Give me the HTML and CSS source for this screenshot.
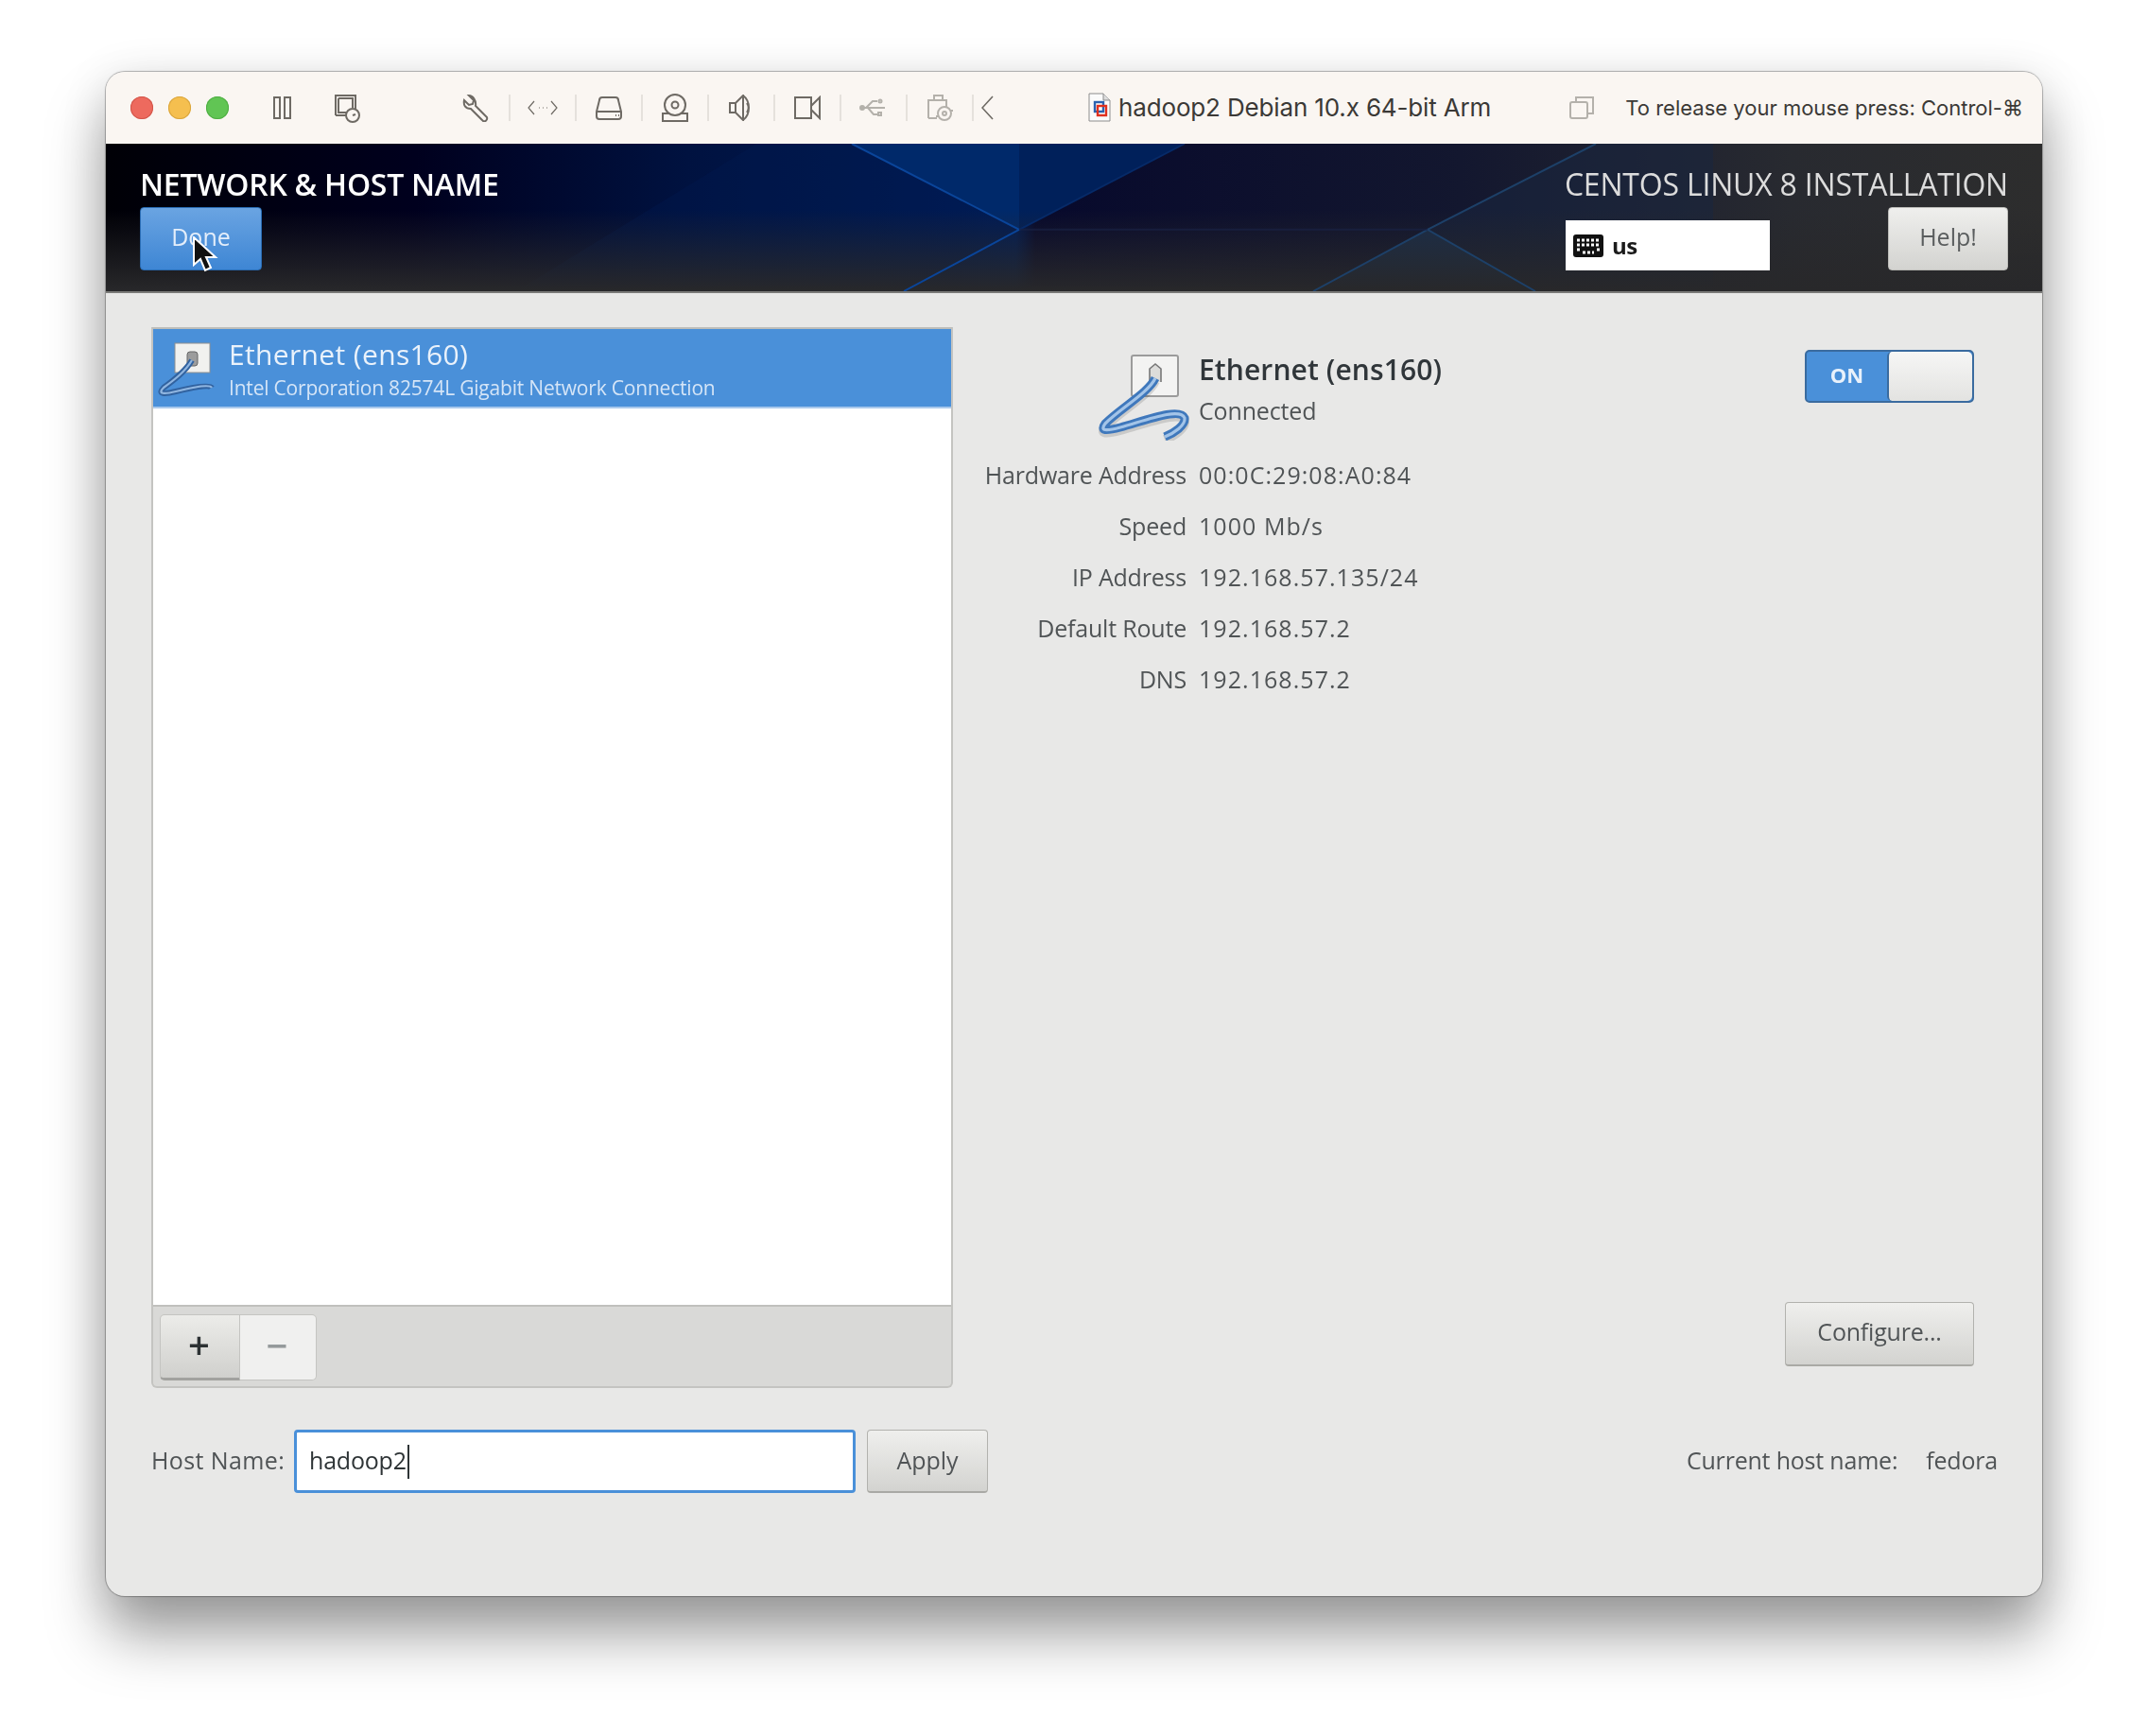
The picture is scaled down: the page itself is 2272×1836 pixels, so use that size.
FILE: index.html
```html
<!DOCTYPE html>
<html lang="en">
<head>
<meta charset="utf-8">
<title>hadoop2 Debian 10.x 64-bit Arm</title>
<link rel="stylesheet" href="styles.css">
</head>
<body>
<div class="window">
  <div class="titlebar">
    <div class="lights"><span class="light red"></span><span class="light yellow"></span><span class="light green"></span></div>
    <svg class="ic pause" viewBox="0 0 19 24"><path d="M1 1h6v22H1zM12 1h6v22h-6z"/></svg>
    <svg class="ic snap" viewBox="0 0 28 30"><path d="M2 22V1h21v14M2 22h11M5 4h15v10M5 4v15h8"/><circle cx="20" cy="22" r="7"/><path d="M20 22l3-1"/></svg>
    <div class="tools">
      <div class="tool"><svg class="ic" width="30" height="30" viewBox="0 0 30 30"><path d="M7 2l5 5-1 4-4 1-5-5c-1 5 1 9 7 9l13 13c2 1 5-1 4-4L14 13c1-6-3-11-7-11z"/></svg></div>
      <div class="tool"><svg class="ic thin" width="32" height="24" viewBox="0 0 32 24"><path d="M7 5L1 12l6 7M25 5l6 7-6 7M12 12h1M16 12h1M20 12h1"/></svg></div>
      <div class="tool"><svg class="ic" width="30" height="26" viewBox="0 0 30 26"><path d="M8 2h14c2 0 3 1 3 3l3 12v5c0 2-1 3-3 3H5c-2 0-3-1-3-3v-5L5 5c0-2 1-3 3-3zM2 17h26M22 21h1M25 21h1"/></svg></div>
      <div class="tool"><svg class="ic" width="30" height="30" viewBox="0 0 30 30"><circle cx="15" cy="12" r="11"/><circle cx="15" cy="12" r="3.5"/><path d="M2 20v9h26v-9M2 21h7M21 21h7"/></svg></div>
      <div class="tool"><svg class="ic" width="28" height="28" viewBox="0 0 28 28"><path d="M2 9h6l8-8v26l-8-8H2zM8 9v10M20 9c2 3 2 7 0 10M16 1c8 6 8 20 0 26"/></svg></div>
      <div class="tool"><svg class="ic" width="30" height="26" viewBox="0 0 30 26"><path d="M2 2h17v22H2zM19 11l9-9v22l-9-9"/></svg></div>
      <div class="tool"><svg class="ic dim" width="30" height="24" viewBox="0 0 30 24"><path d="M1 12h26M7 12l7-7h5M9 12l6 7h5"/><circle cx="3" cy="12" r="2"/><circle cx="22" cy="5" r="1.5"/><rect x="20" y="17" width="3" height="3"/></svg></div>
      <div class="tool"><svg class="ic dim" width="30" height="30" viewBox="0 0 30 30"><path d="M3 26V7h6V2h9v5h4v8M3 26h9M9 7h9"/><circle cx="20" cy="21" r="7"/><circle cx="20" cy="21" r="2"/><path d="M27 18h2M11 24h2"/></svg></div>
      <svg class="ic chevron" width="13" height="26" viewBox="0 0 13 26"><path d="M12 1L1 13l11 12"/></svg>
    </div>
    <div class="vm-title">
      <svg class="doc" width="24" height="31" viewBox="0 0 24 31"><path d="M1 1h15l7 7v22H1z" fill="#fbfbfb" stroke="#8d8d8d"/><path d="M16 1v7h7" fill="#ddd" stroke="#8d8d8d"/><rect x="7" y="10" width="9" height="10" fill="none" stroke="#2a62b0" stroke-width="2.4"/><rect x="10" y="14" width="9" height="10" fill="none" stroke="#e0301e" stroke-width="2.4"/></svg>
      <span>hadoop2 Debian 10.x 64-bit Arm</span>
    </div>
    <svg class="ic dim copy" width="26" height="24" viewBox="0 0 26 24"><path d="M7 6V1h18v17h-6"/><rect x="1" y="6" width="18" height="17" rx="2"/></svg>
    <div class="release">To release your mouse press: Control-⌘</div>
  </div>

  <div class="screen">
    <header class="header">
      <svg class="header-art" viewBox="0 0 2048 158" preserveAspectRatio="none">
        <defs>
          <linearGradient id="hbase" x1="0" x2="1" y1="0" y2="0">
            <stop offset="0" stop-color="#000006"/>
            <stop offset=".16" stop-color="#00001e"/>
            <stop offset=".3" stop-color="#001240"/>
            <stop offset=".47" stop-color="#001d58"/>
            <stop offset=".48" stop-color="#07092c"/>
            <stop offset=".7" stop-color="#13172f"/>
            <stop offset=".87" stop-color="#282a30"/>
            <stop offset="1" stop-color="#2d2d2d"/>
          </linearGradient>
          <linearGradient id="hfade" x1="0" x2="0" y1="0" y2="1">
            <stop offset=".45" stop-color="#28282a" stop-opacity="0"/>
            <stop offset="1" stop-color="#28282a"/>
          </linearGradient>
        </defs>
        <rect width="2048" height="158" fill="url(#hbase)"/>
        <polygon points="789,0 966,0 966,92" fill="#00296a"/>
        <polygon points="966,0 1141,0 966,92" fill="#00205a"/>
        <polygon points="1398,92 1576,0 1700,0 1700,158 1512,158" fill="#1a2740" opacity=".55"/>
        <polygon points="1398,92 1277,158 1512,158" fill="#1d3554" opacity=".8"/>
        <polygon points="434,158 688,0 789,0 966,92 844,158" fill="#001a50" opacity=".35"/>
        <rect width="2048" height="158" fill="url(#hfade)"/>
        <g fill="none" stroke-width="2">
          <path d="M789 0L966 92L844 158" stroke="#0a459a"/>
          <path d="M966 92L1141 0" stroke="#062a68"/>
          <path d="M1576 0L1398 92L1512 158M1398 92L1277 158" stroke="#1d4068"/>
          <path d="M966 92H1398" stroke="#1a2244" opacity=".7"/>
        </g>
      </svg>
      <div class="header-left">
        <h1 class="spoke-title">NETWORK &amp; HOST NAME</h1>
        <button class="btn-done">Done</button>
      </div>
      <div class="header-right">
        <div class="product">CENTOS LINUX 8 INSTALLATION</div>
        <div class="header-controls">
          <div class="kbd">
            <svg width="32" height="24" viewBox="0 0 32 24"><rect width="32" height="24" rx="3" fill="#111"/><path d="M4 6h24M4 11h24M4 16h3M10 19h12M25 16h3" stroke="#fff" stroke-width="2.8" stroke-dasharray="3 2"/></svg>
            <span>us</span>
          </div>
          <button class="btn-help">Help!</button>
        </div>
      </div>
      <svg class="cursor" width="28" height="38" viewBox="0 0 28 38"><path d="M2 1v29l7-6 5 12 6-3-5-11h10z" fill="#111" stroke="#fff" stroke-width="2"/></svg>
    </header>

    <main class="content">
      <div class="main-row">
        <section class="list-panel">
          <div class="list">
            <div class="list-row">
              <svg class="row-icon" width="83" height="86" viewBox="0 0 83 86">
                <rect x="25" y="15" width="37" height="31" fill="#f1f1ef" stroke="#8f8f8f"/>
                <rect x="38" y="24" width="11" height="15" rx="3" fill="#9c9c9c" stroke="#666"/>
                <path d="M43 33C36 45 24 54 13 62C6 69 14 69 26 66C42 62 62 58 64 62" fill="none" stroke="#31629f" stroke-width="6"/>
                <path d="M43 33C36 45 24 54 13 62C6 69 14 69 26 66C42 62 62 58 64 62" fill="none" stroke="#8fb5e0" stroke-width="2.2"/>
              </svg>
              <div class="row-text">
                <div class="row-title">Ethernet (ens160)</div>
                <div class="row-sub">Intel Corporation 82574L Gigabit Network Connection</div>
              </div>
            </div>
          </div>
          <div class="list-toolbar">
            <button class="tb-btn tb-add">+</button>
            <button class="tb-btn tb-remove">−</button>
          </div>
        </section>

        <section class="details">
          <div class="details-top">
            <div class="info-grid">
              <div class="info-icon">
                <svg width="100" height="96" viewBox="0 0 100 96">
                  <rect x="39" y="6" width="49" height="43" rx="2" fill="#f3f3f2" stroke="#9b9b9b" stroke-width="2"/>
                  <path d="M58 34V20l6-5 6 5v14" fill="#dcdcda" stroke="#777" stroke-width="1.6"/>
                  <path d="M74 92C84 88 96 80 95 72C90 60 50 76 27 82C12 86 5 86 11 78C27 62 57 45 64 30" fill="none" stroke="#000" stroke-opacity=".13" stroke-width="10" transform="translate(0 3)"/>
                  <path d="M74 92C84 88 96 80 95 72C90 60 50 76 27 82C12 86 5 86 11 78C27 62 57 45 64 30" fill="none" stroke="#3f78bc" stroke-width="9"/>
                  <path d="M74 92C84 88 96 80 95 72C90 60 50 76 27 82C12 86 5 86 11 78C27 62 57 45 64 30" fill="none" stroke="#a3c4e8" stroke-width="3.2"/>
                </svg>
              </div>
              <div class="info-head">
                <div class="info-title">Ethernet (ens160)</div>
                <div class="info-state">Connected</div>
              </div>
              <div class="k">Hardware Address</div><div class="v">00:0C:29:08:A0:84</div>
              <div class="k">Speed</div><div class="v">1000 Mb/s</div>
              <div class="k">IP Address</div><div class="v">192.168.57.135/24</div>
              <div class="k">Default Route</div><div class="v">192.168.57.2</div>
              <div class="k">DNS</div><div class="v">192.168.57.2</div>
            </div>
            <div class="switch"><span class="switch-on">ON</span><span class="switch-knob"></span></div>
          </div>
          <button class="btn btn-configure">Configure...</button>
        </section>
      </div>

      <div class="host-row">
        <label class="host-label">Host Name:</label>
        <div class="host-input"><span>hadoop2</span><i class="caret"></i></div>
        <button class="btn btn-apply">Apply</button>
        <div class="current"><span>Current host name:</span><span>fedora</span></div>
      </div>
    </main>
  </div>
</div>
</body>
</html>
```

FILE: styles.css
```css
* { box-sizing: border-box; }
html, body { margin: 0; height: 100%; background: #fff; }
body { padding: 76px 112px 0; font-family: "Open Sans", "Noto Sans", sans-serif; overflow: hidden; }

.window {
  width: 2048px;
  height: 1612px;
  border-radius: 20px;
  overflow: visible;
  display: flex;
  flex-direction: column;
  background: #e8e8e7;
  box-shadow: 0 0 1px 1px rgba(0,0,0,.28), 0 42px 62px rgba(0,0,0,.36), 0 8px 50px rgba(0,0,0,.12);
}

/* Title bar */
.titlebar {
  height: 76px;
  flex: none;
  display: flex;
  align-items: center;
  background: #faf6f2;
  border-radius: 20px 20px 0 0;
  padding: 0 20px 1px 26px;
  font-family: Inter, "Liberation Sans", sans-serif;
  color: #3b3936;
}
.lights { display: flex; gap: 16px; }
.light { width: 24px; height: 24px; border-radius: 50%; }
.red { background: #ed6a5e; box-shadow: inset 0 0 0 1px #d2564a; }
.yellow { background: #f5bf4f; box-shadow: inset 0 0 0 1px #d9a53d; }
.green { background: #61c554; box-shadow: inset 0 0 0 1px #4fae43; }

.ic { fill: none; stroke: #6e6a64; stroke-width: 2; flex: none; }
.ic.dim { stroke: #b4b1ab; }
.ic.thin { stroke-width: 1.2; }
.pause { width: 19px; height: 24px; margin-left: 47px; }
.snap { width: 28px; height: 30px; margin-left: 45px; margin-top: 3px; }

.tools { display: flex; align-items: center; margin-left: 89px; }
.tool {
  width: 70px;
  height: 28px;
  display: flex;
  align-items: center;
  justify-content: center;
  border-right: 2px solid #e5e1dc;
}
.chevron { margin-left: 8px; stroke-width: 1.6; }

.vm-title {
  margin-left: 100px;
  display: flex;
  align-items: center;
  gap: 8px;
  font-size: 26px;
  letter-spacing: -.15px;
}
.doc { flex: none; }
.copy { margin-left: auto; }
.release { margin-left: 33px; font-size: 22px; letter-spacing: 0; white-space: nowrap; }

.screen { flex: 1; display: flex; flex-direction: column; min-height: 0; filter: blur(.45px); border-radius: 0 0 20px 20px; overflow: hidden; }

/* Installer header */
.header {
  position: relative;
  height: 158px;
  flex: none;
  display: flex;
  justify-content: space-between;
  padding: 22px 36px 0 36px;
  border-bottom: 2px solid #7a7a78;
  color: #fff;
}
.header-art { position: absolute; left: 0; top: 0; width: 100%; height: 100%; }
.header-left, .header-right { position: relative; display: flex; flex-direction: column; }
.spoke-title { margin: 0 0 4px; font-size: 32px; line-height: 41px; font-weight: 600; letter-spacing: -.25px; white-space: nowrap; }
.btn-done {
  width: 129px;
  height: 67px;
  border: 1px solid #2a6cb3;
  border-radius: 4px;
  background: linear-gradient(#6aa4e2, #3e86d4);
  color: #e4eefa;
  font: 25px "Open Sans", sans-serif;
  padding: 0 0 6px;
}
.header-right { align-items: flex-end; }
.product { margin-bottom: 4px; font-size: 32px; line-height: 41px; color: #dcdcdc; letter-spacing: -.2px; white-space: nowrap; }
.header-controls { display: flex; align-items: flex-end; gap: 125px; }
.kbd {
  width: 216px;
  height: 53px;
  background: #fff;
  display: flex;
  align-items: center;
  gap: 9px;
  padding: 0 8px;
  color: #1b1b1b;
  font-size: 24px;
  font-weight: 700;
  letter-spacing: -.5px;
}
.btn-help {
  width: 127px;
  height: 67px;
  border: 1px solid #bdbdb9;
  border-radius: 4px;
  background: linear-gradient(#efefed, #d3d3d0);
  color: #5a5d5e;
  font: 25px "Open Sans", sans-serif;
  padding: 0 0 6px;
}
.cursor { position: absolute; left: 91px; top: 98px; }

/* Content */
.content { flex: 1; display: flex; flex-direction: column; padding: 36px 47px 0 48px; color: #505456; min-height: 0; }
.main-row { display: flex; height: 1122px; flex: none; }

.list-panel {
  width: 848px;
  flex: none;
  display: flex;
  flex-direction: column;
  border: 2px solid #c4c4c1;
  border-top-color: #bdbdba;
  border-radius: 0 0 6px 6px;
  background: #d9d9d7;
}
.list { flex: 1; background: #fff; border-bottom: 2px solid #c0c0bd; }
.list-row {
  height: 84px;
  display: flex;
  background: #4a90d9;
  color: #eaf2fb;
  border-bottom: 2px solid #a9c9ec;
}
.row-icon { flex: none; margin-left: -2px; }
.row-text { padding-top: 7px; margin-left: -1px; }
.row-title { font-size: 30px; line-height: 40px; letter-spacing: .35px; }
.row-sub { font-size: 21px; line-height: 30px; letter-spacing: -.2px; color: #d5e5f7; }

.list-toolbar { height: 84px; flex: none; padding: 8px 0 0 7px; display: flex; align-items: flex-start; }
.tb-btn { width: 85px; height: 70px; padding: 0 2px 6px 0; font: 600 40px "Open Sans", sans-serif; border: 1px solid #c4c4c1; }
.tb-add { background: linear-gradient(#ecece9, #d0d0cd); color: #2c3133; border-radius: 5px 0 0 5px; border-bottom: 3px solid #a2a29f; }
.tb-remove { width: 81px; background: #f0f0ef; color: #94999a; border-radius: 0 5px 5px 0; border-left: 0; }

.details { flex: 1; display: flex; flex-direction: column; padding-right: 25px; padding-bottom: 23px; }
.details-top { display: flex; justify-content: space-between; align-items: flex-start; }
.info-grid {
  display: grid;
  grid-template-columns: 247px auto;
  grid-template-rows: 129px repeat(5, 54px);
  column-gap: 13px;
  font-size: 25px;
}
.info-icon { display: flex; justify-content: flex-end; padding: 24px 0 0; margin-right: -3px; }
.info-head { padding-top: 27px; }
.info-title { font-size: 30px; line-height: 36px; font-weight: 600; color: #30363a; letter-spacing: .1px; }
.info-state { font-size: 25px; line-height: 50px; letter-spacing: -.15px; }
.k, .v { line-height: 54px; white-space: nowrap; }
.k { text-align: right; letter-spacing: -.2px; }
.v { letter-spacing: 1.05px; }

.switch { width: 179px; height: 56px; margin-top: 24px; display: flex; border: 2px solid #3a6b9f; border-radius: 5px; overflow: hidden; background: #4a90d9; }
.switch-on { width: 85px; flex: none; text-align: center; color: #e8f1fb; font-size: 22px; font-weight: 700; line-height: 48px; }
.switch-knob { flex: 1; background: linear-gradient(#f6f6f5, #e3e3e1); border-left: 2px solid #3a6b9f; border-radius: 5px; }

.btn { border: 1px solid #b2b2ae; border-bottom: 2px solid #a9a9a5; border-radius: 4px; background: linear-gradient(#efefed, #d3d3d0); color: #505456; font: 25px "Open Sans", sans-serif; padding: 0 0 3px; }
.btn-configure { width: 200px; height: 68px; margin-top: auto; align-self: flex-end; letter-spacing: -.2px; padding-bottom: 5px; }

.host-row { display: flex; align-items: center; height: 67px; margin-top: 44px; flex: none; font-size: 25px; letter-spacing: -.2px; line-height: 1.4; }
.host-label { width: 151px; flex: none; letter-spacing: .4px; padding-bottom: 3px; }
.host-input {
  width: 594px;
  height: 67px;
  background: #fff;
  border: 3px solid #4a90d9;
  border-radius: 4px;
  padding: 0 13px;
  display: flex;
  align-items: center;
  color: #2e3436;
}
.host-input span { padding-bottom: 3px; }
.caret { width: 2px; height: 36px; background: #2e3436; margin-left: 1px; }
.btn-apply { width: 128px; height: 67px; margin-left: 12px; }
.current { margin-left: auto; display: flex; gap: 30px; padding-bottom: 3px; }
```
